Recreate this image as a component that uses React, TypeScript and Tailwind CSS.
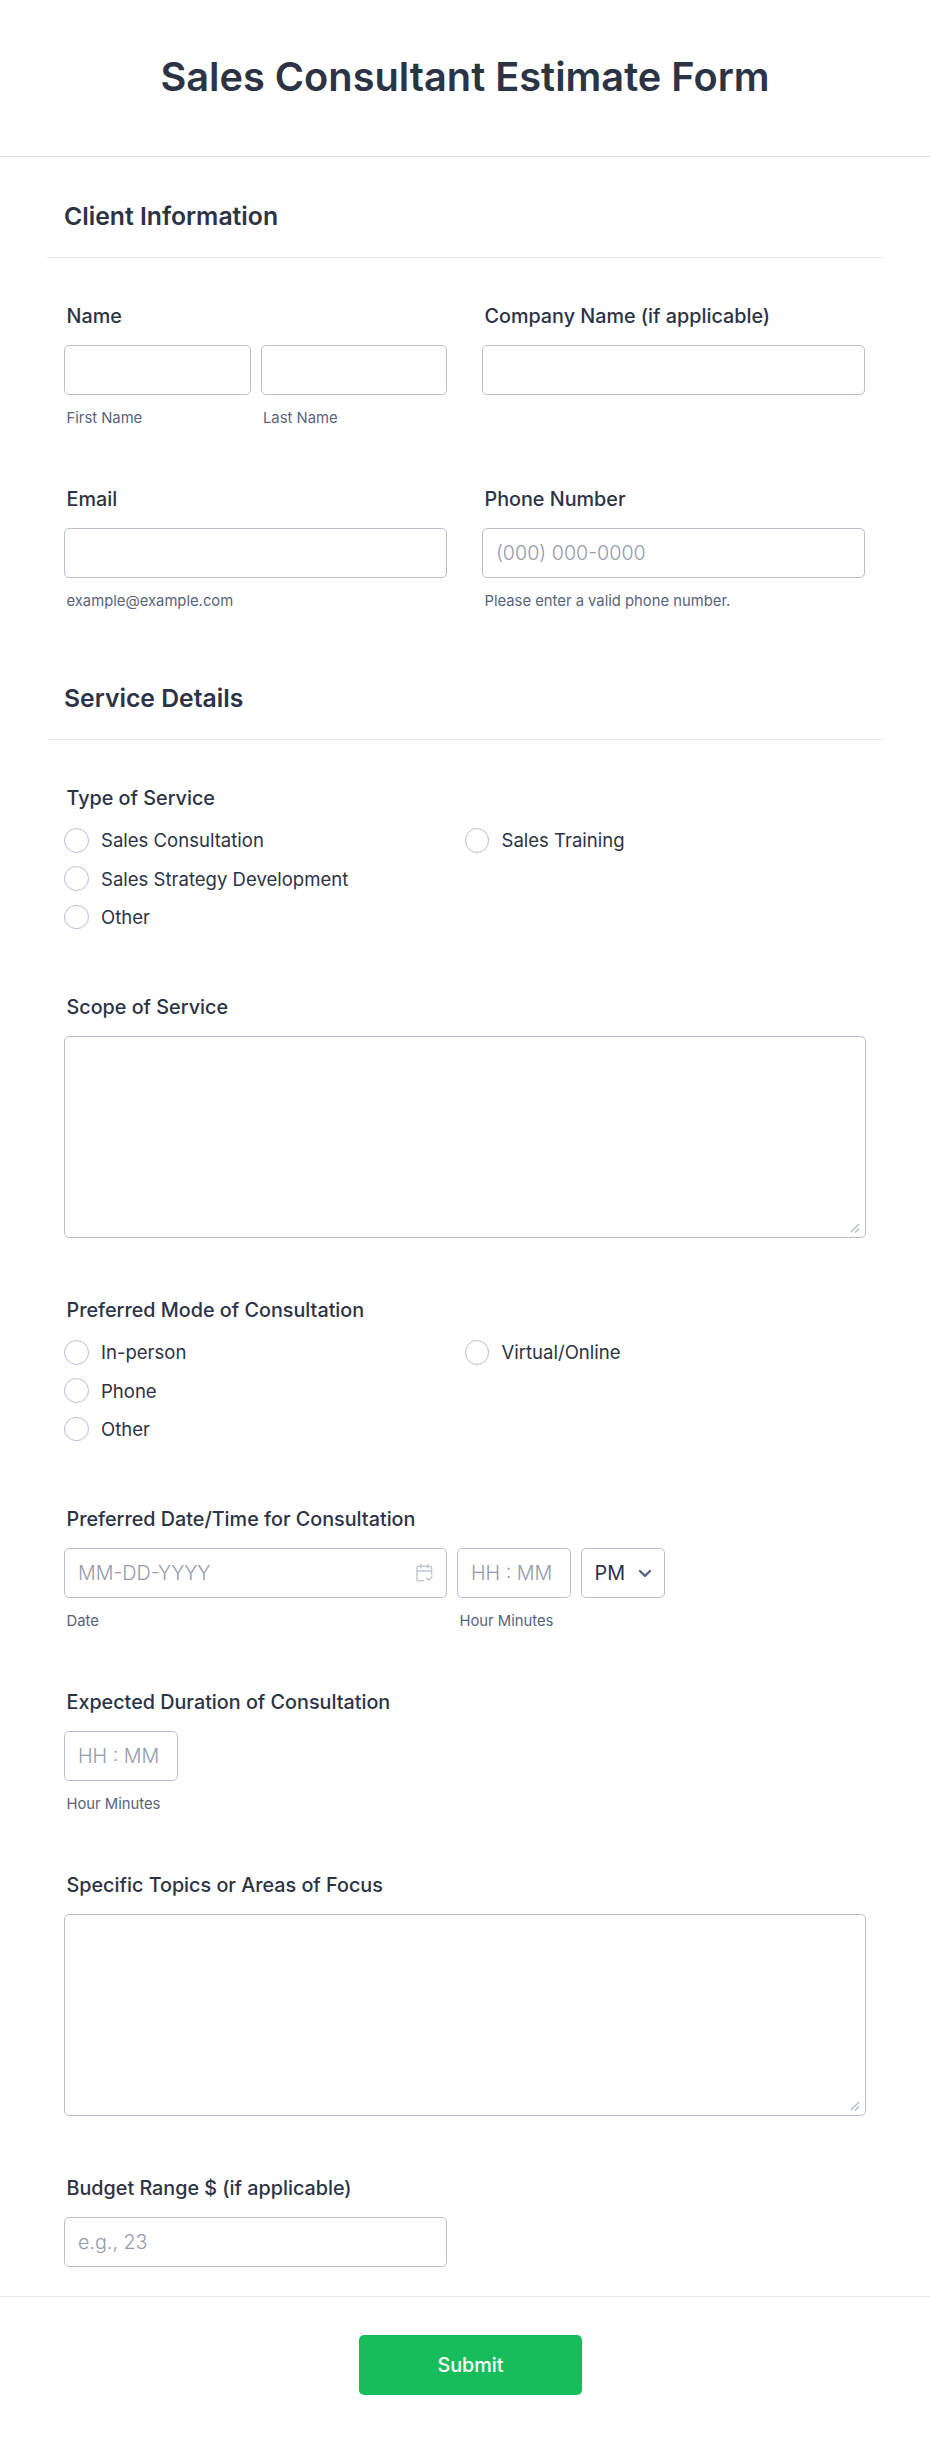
import type { ReactNode } from "react";

const inputClass =
  "block h-[50px] w-full rounded-[5px] border border-[#b9bfcd] bg-white px-[13px] text-[19.7px] font-light text-[#2c3345] outline-none placeholder:text-[#959aab] placeholder:opacity-100";

function SectionHeading({ children }: { children: ReactNode }) {
  return (
    <div className="mx-[47px] flex h-[101px] items-end border-b border-[#e9eaf1] pb-[26px] pl-[17px]">
      <h2 className="text-[24.75px] leading-[30px] font-semibold text-[#2c3345]">{children}</h2>
    </div>
  );
}

function Field({ label, className = "", children }: { label: string; className?: string; children: ReactNode }) {
  return (
    <div className={className}>
      <div className="mb-[17px] h-6 pl-[2.5px] text-[19.75px] leading-6 font-medium whitespace-nowrap text-[#2c3345]">
        {label}
      </div>
      {children}
    </div>
  );
}

function SubLabel({ children }: { children: ReactNode }) {
  return (
    <div className="mt-[14px] pl-[2.5px] text-[14.8px] leading-[18px] whitespace-nowrap text-[#57647e]">{children}</div>
  );
}

function Choices({ name, options }: { name: string; options: string[] }) {
  return (
    <div className="grid grid-cols-[400.5px_400.5px] gap-y-[13.9px] pt-px">
      {options.map((option, i) => (
        <label
          key={option}
          className={
            i === 1
              ? "col-start-2 flex h-[24.5px] items-center gap-[12.5px]"
              : "col-start-1 flex h-[24.5px] items-center gap-[12.5px]"
          }
        >
          <input
            type="radio"
            name={name}
            className="size-[24.5px] shrink-0 appearance-none rounded-full border border-[#b9bfcd] bg-white"
          />
          <span className="text-[18.55px] leading-6 text-[#2c3345]">{option}</span>
        </label>
      ))}
    </div>
  );
}

function TextArea() {
  return (
    <div className="relative">
      <textarea className="block h-[202px] w-full resize-none rounded-[5px] border border-[#b9bfcd] bg-white outline-none" />
      <svg className="absolute right-[6px] bottom-[5px]" width="10" height="10" viewBox="0 0 10 10" fill="none" stroke="#b3b9c8" strokeWidth="1.3">
        <path d="M1 9 9 1M5 9.5 9 5.5" />
      </svg>
    </div>
  );
}

function CalendarIcon() {
  return (
    <svg
      className="absolute top-[15px] right-[14px]"
      width="17"
      height="19"
      viewBox="0 0 17 19"
      fill="none"
      stroke="#c3c8d4"
      strokeWidth="1.5"
      strokeLinecap="round"
      strokeLinejoin="round"
    >
      <path d="M7.3 17.7H2.4A1.4 1.4 0 0 1 1 16.3V4.9A1.6 1.6 0 0 1 2.6 3.3H14a1.6 1.6 0 0 1 1.6 1.6V11.5M1 8h14.6M4.9 1.4v3.4M11.7 1.4v3.4M10.8 15.6l1.9 1.7 3.2-3.5" />
    </svg>
  );
}

export default function App() {
  return (
    <form className="h-[2444px] w-[930px] overflow-hidden bg-white font-['Inter','Liberation_Sans',sans-serif]">
      <header className="flex h-[157px] items-center justify-center border-b border-[#d8dde7] pb-[2px]">
        <h1 className="text-[39.75px] leading-[48px] font-semibold text-[#2c3345]">Sales Consultant Estimate Form</h1>
      </header>

      <SectionHeading>Client Information</SectionHeading>
      <div className="grid grid-cols-[383px_383px] gap-x-[35px] pt-[46px] pl-16">
        <Field label="Name" className="h-[183px]">
          <div className="grid grid-cols-2 gap-[10px]">
            <div>
              <input className={inputClass} />
              <SubLabel>First Name</SubLabel>
            </div>
            <div>
              <input className={inputClass} />
              <SubLabel>Last Name</SubLabel>
            </div>
          </div>
        </Field>
        <Field label="Company Name (if applicable)">
          <input className={inputClass} />
        </Field>
        <Field label="Email" className="h-[166px]">
          <input className={inputClass} />
          <SubLabel>example@example.com</SubLabel>
        </Field>
        <Field label="Phone Number">
          <input className={inputClass} placeholder="(000) 000-0000" />
          <SubLabel>Please enter a valid phone number.</SubLabel>
        </Field>
      </div>

      <div className="-mt-[14px]">
        <SectionHeading>Service Details</SectionHeading>
      </div>
      <div className="w-[866px] pt-[46px] pl-16">
        <Field label="Type of Service" className="h-[209px]">
          <Choices
            name="service"
            options={["Sales Consultation", "Sales Training", "Sales Strategy Development", "Other"]}
          />
        </Field>
        <Field label="Scope of Service" className="h-[303px]">
          <TextArea />
        </Field>
        <Field label="Preferred Mode of Consultation" className="h-[209px]">
          <Choices name="mode" options={["In-person", "Virtual/Online", "Phone", "Other"]} />
        </Field>
        <Field label="Preferred Date/Time for Consultation" className="h-[183px]">
          <div className="grid grid-cols-[383px_114px_84px] gap-[10px]">
            <div className="relative">
              <input className={inputClass} placeholder="MM-DD-YYYY" />
              <CalendarIcon />
              <SubLabel>Date</SubLabel>
            </div>
            <div>
              <input className={inputClass} placeholder="HH : MM" />
              <SubLabel>Hour Minutes</SubLabel>
            </div>
            <div className="flex h-[50px] items-center justify-between rounded-[5px] border border-[#b9bfcd] px-[12.5px] pt-px text-[19.8px] text-[#2c3345]">
              PM
              <svg width="14" height="9" viewBox="0 0 14 9" fill="none" stroke="#57647e" strokeWidth="2.4" strokeLinecap="round" strokeLinejoin="round">
                <path d="m2 2 5 4.8L12 2" />
              </svg>
            </div>
          </div>
        </Field>
        <Field label="Expected Duration of Consultation" className="h-[183px]">
          <div className="w-[114px]">
            <input className={inputClass} placeholder="HH : MM" />
          </div>
          <SubLabel>Hour Minutes</SubLabel>
        </Field>
        <Field label="Specific Topics or Areas of Focus" className="h-[303px]">
          <TextArea />
        </Field>
        <Field label="Budget Range $ (if applicable)" className="h-[120px]">
          <div className="w-[383px]">
            <input className={inputClass} placeholder="e.g., 23" />
          </div>
        </Field>
      </div>

      <footer className="flex h-[148px] justify-center border-t border-[#e9eaf1] pt-[38px] pl-[11px]">
        <button
          type="button"
          className="h-[60px] w-[223px] rounded-[5px] bg-[#18bd5b] pt-px text-[19.8px] font-medium text-white"
        >
          Submit
        </button>
      </footer>
    </form>
  );
}
